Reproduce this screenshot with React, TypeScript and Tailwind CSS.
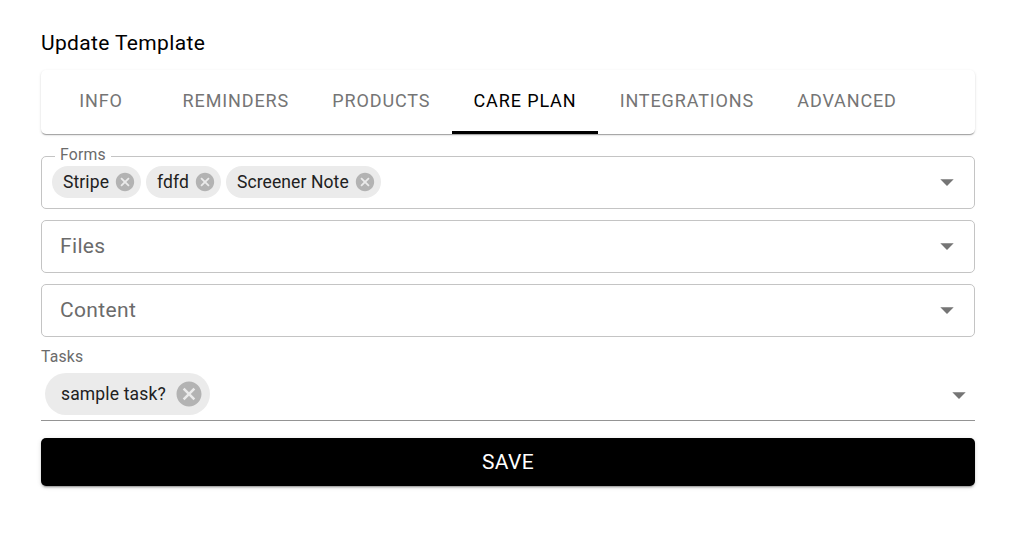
import React from 'react';

const tabs = ['Info', 'Reminders', 'Products', 'Care Plan', 'Integrations', 'Advanced'];
const forms = ['Stripe', 'fdfd', 'Screener Note'];

function Arrow({ className = '' }: { className?: string }) {
  return (
    <svg viewBox="0 0 24 24" className={`w-8 h-8 shrink-0 fill-[#757575] ${className}`}>
      <path d="M7 10l5 5 5-5z" />
    </svg>
  );
}

function CancelIcon({ className }: { className: string }) {
  return (
    <svg viewBox="0 0 24 24" className={className}>
      <path d="M12 2C6.47 2 2 6.47 2 12s4.47 10 10 10 10-4.47 10-10S17.53 2 12 2zm5 13.59L15.59 17 12 13.41 8.41 17 7 15.59 10.59 12 7 8.41 8.41 7 12 10.59 15.59 7 17 8.41 13.41 12 17 15.59z" />
    </svg>
  );
}

function Chip({ label }: { label: string }) {
  return (
    <div className="h-8 flex items-center rounded-full bg-[#ebebeb] pl-[11px] pr-[5px] gap-[5px]">
      <span className="pt-[2px] text-[17.5px] leading-none tracking-[0.1px] text-[#212121]">{label}</span>
      <CancelIcon className="w-[22px] h-[22px] fill-[#b3b3b3]" />
    </div>
  );
}

function SelectBox({ label }: { label: string }) {
  return (
    <div className="h-[53px] flex items-center justify-between rounded-[5px] border border-[#c4c4c4] pl-[18px] pr-[11px]">
      <span className="text-[21px] tracking-[0.35px] text-[#6b6b6b]">{label}</span>
      <Arrow className="mb-[2px]" />
    </div>
  );
}

export default function App() {
  return (
    <div className="w-[1032px] h-[540px] bg-white pl-[41px] pr-[57px] pt-[28px] font-['Roboto',sans-serif] overflow-hidden">
      <h1 className="text-[21px] leading-[30px] tracking-[0.35px] text-black">Update Template</h1>

      <div className="mt-[12px] h-[64px] flex rounded-[5px] bg-white shadow-[0_2px_1px_-1px_rgba(0,0,0,0.2),0_1px_1px_0_rgba(0,0,0,0.14),0_1px_3px_0_rgba(0,0,0,0.12)]">
        {tabs.map((t) => (
          <div
            key={t}
            className={`min-w-[120px] px-[21.6px] flex items-center justify-center text-[18px] tracking-[0.875px] uppercase border-b-[3px] ${
              t === 'Care Plan' ? 'border-black text-black' : 'border-transparent text-[#757575]'
            }`}
          >
            {t}
          </div>
        ))}
      </div>

      <div className="relative mt-[22px] h-[53px] flex items-center justify-between rounded-[5px] border border-[#c4c4c4] pl-[10px] pr-[11px]">
        <span className="absolute left-[13px] -top-[11px] bg-white px-[5px] text-[15.75px] leading-[18px] tracking-[0.2px] text-[#6b6b6b]">
          Forms
        </span>
        <div className="flex gap-[5px] mb-[2px]">
          {forms.map((f) => (
            <Chip key={f} label={f} />
          ))}
        </div>
        <Arrow className="mb-[2px]" />
      </div>

      <div className="mt-[11px] flex flex-col gap-[11px]">
        <SelectBox label="Files" />
        <SelectBox label="Content" />
      </div>

      <div className="mt-[11px] text-[15.75px] leading-[18px] tracking-[0.2px] text-[#6b6b6b]">Tasks</div>
      <div className="mt-[7px] h-[48px] flex items-start justify-between border-b border-[#949494] pl-[4px]">
        <div className="h-[42px] flex items-center rounded-full bg-[#ebebeb] pl-[16px] pr-[6px] gap-[8px]">
          <span className="text-[17.5px] tracking-[0.15px] text-[#212121]">sample task?</span>
          <CancelIcon className="w-[30px] h-[30px] fill-[#b3b3b3]" />
        </div>
        <div className="mt-[6px]">
          <Arrow />
        </div>
      </div>

      <button className="mt-[17px] w-full h-[48px] pt-[1px] rounded-[5px] bg-black text-white text-[21px] tracking-[0.4px] uppercase shadow-[0_3px_1px_-2px_rgba(0,0,0,0.2),0_2px_2px_0_rgba(0,0,0,0.14),0_1px_5px_0_rgba(0,0,0,0.12)]">
        Save
      </button>
    </div>
  );
}
